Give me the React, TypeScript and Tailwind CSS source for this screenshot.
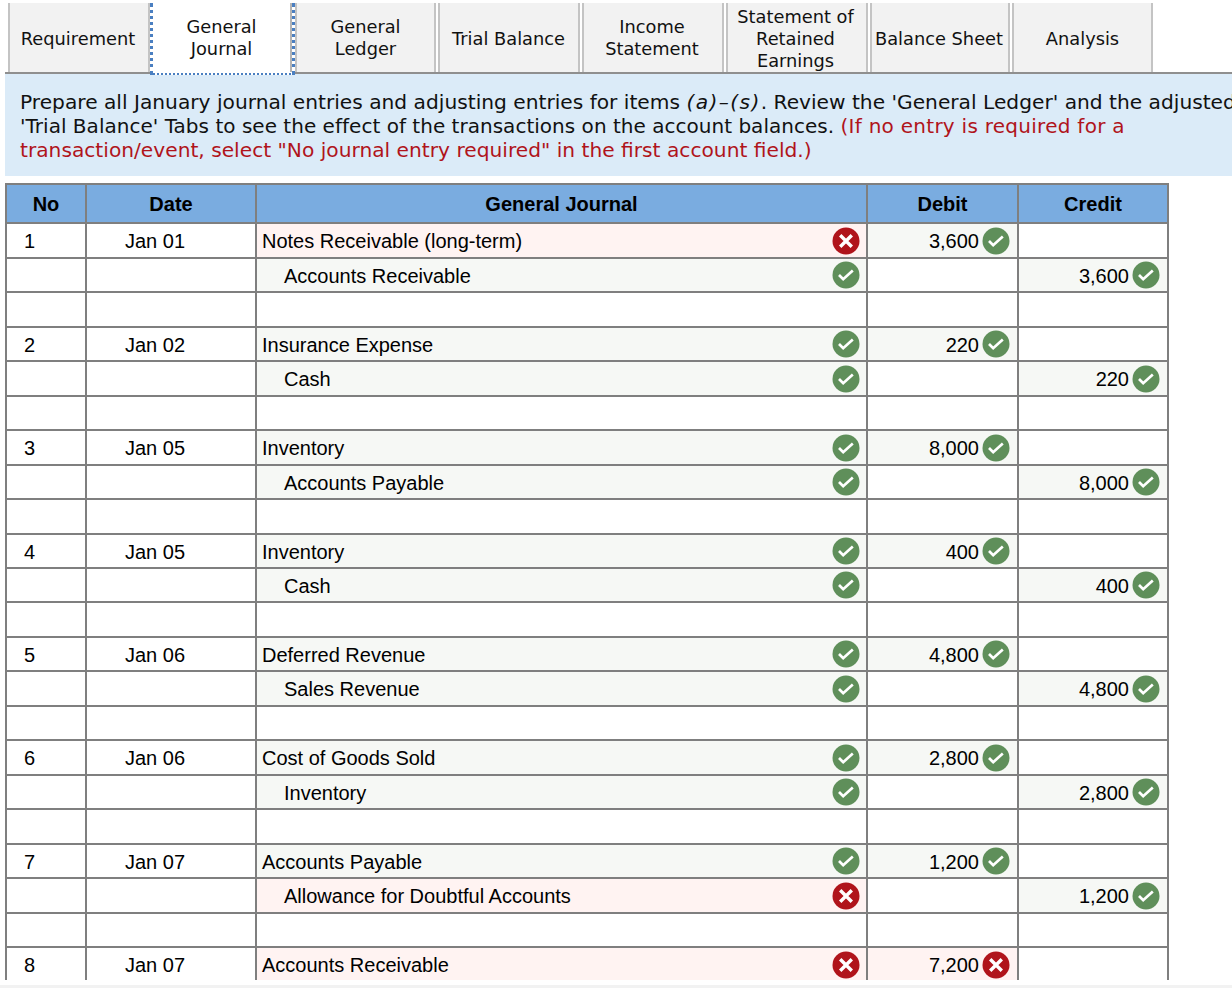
import React from 'react';

const tabs = [
  { label: 'Requirement', size: 'w-[142px] pt-[3px] pr-[2px]' },
  { label: 'General Journal', size: 'w-[145px]', active: true },
  { label: 'General Ledger', size: 'w-[141px] mr-[2px]' },
  { label: 'Trial Balance', size: 'w-[142px] mr-[2px] pt-[3px] pr-[1px]' },
  { label: 'Income Statement', size: 'w-[142px] mr-[2px] pr-[2px]' },
  { label: 'Statement of Retained Earnings', size: 'w-[142px] mr-[2px] pt-[3px] pr-[3px]' },
  { label: 'Balance Sheet', size: 'w-[140px] mr-[2px] pt-[3px] pr-[2px]' },
  { label: 'Analysis', size: 'w-[141px] pt-[3px]' },
];

type Row = { h: string; no?: string; date?: string; account?: string; indent?: boolean; accountOk?: boolean; debit?: string; credit?: string; amountOk?: boolean };

const tall = 'h-[35px]';
const short = 'h-[34px]';

const rows: Row[] = [
  { h: tall, no: '1', date: 'Jan 01', account: 'Notes Receivable (long-term)', accountOk: false, debit: '3,600', amountOk: true },
  { h: short, account: 'Accounts Receivable', indent: true, accountOk: true, credit: '3,600', amountOk: true },
  { h: tall },
  { h: short, no: '2', date: 'Jan 02', account: 'Insurance Expense', accountOk: true, debit: '220', amountOk: true },
  { h: tall, account: 'Cash', indent: true, accountOk: true, credit: '220', amountOk: true },
  { h: short },
  { h: tall, no: '3', date: 'Jan 05', account: 'Inventory', accountOk: true, debit: '8,000', amountOk: true },
  { h: short, account: 'Accounts Payable', indent: true, accountOk: true, credit: '8,000', amountOk: true },
  { h: tall },
  { h: short, no: '4', date: 'Jan 05', account: 'Inventory', accountOk: true, debit: '400', amountOk: true },
  { h: short, account: 'Cash', indent: true, accountOk: true, credit: '400', amountOk: true },
  { h: tall },
  { h: short, no: '5', date: 'Jan 06', account: 'Deferred Revenue', accountOk: true, debit: '4,800', amountOk: true },
  { h: tall, account: 'Sales Revenue', indent: true, accountOk: true, credit: '4,800', amountOk: true },
  { h: short },
  { h: tall, no: '6', date: 'Jan 06', account: 'Cost of Goods Sold', accountOk: true, debit: '2,800', amountOk: true },
  { h: short, account: 'Inventory', indent: true, accountOk: true, credit: '2,800', amountOk: true },
  { h: tall },
  { h: short, no: '7', date: 'Jan 07', account: 'Accounts Payable', accountOk: true, debit: '1,200', amountOk: true },
  { h: tall, account: 'Allowance for Doubtful Accounts', indent: true, accountOk: false, credit: '1,200', amountOk: true },
  { h: short },
  { h: tall, no: '8', date: 'Jan 07', account: 'Accounts Receivable', accountOk: false, debit: '7,200', amountOk: false },
];

const Mark = ({ ok }: { ok: boolean }) => (
  <svg viewBox="0 0 28 28" className="w-[28px] h-[28px] shrink-0">
    <circle cx="14" cy="14" r="13.5" fill={ok ? '#5f8f5a' : '#b0141b'} />
    {ok ? (
      <path d="M7 14l4.2 4.2L20.8 9.6" fill="none" stroke="#fff" strokeWidth="2.7" />
    ) : (
      <path d="M8.2 8.2l11.6 11.6M19.8 8.2L8.2 19.8" fill="none" stroke="#fff" strokeWidth="3.4" />
    )}
  </svg>
);

const Amount = ({ value, ok }: { value?: string; ok?: boolean }) => (
  <div className={`flex items-center justify-end gap-[3px] pr-[7px] border-l-2 border-[#7f7f7f] ${value ? (ok ? 'bg-[#f6f8f5]' : 'bg-[#fff3f2]') : ''}`}>
    {value && <span className="pt-[1px]">{value}</span>}
    {value && <Mark ok={!!ok} />}
  </div>
);

const App = () => {
  return (
    <div className="w-[1232px] h-[988px] overflow-hidden bg-white relative">
      <div className="flex pl-[3px] pt-[3px] h-[74px] ml-[5px] border-b-2 border-[#8f8f8f]">
        {tabs.map((t) =>
          t.active ? (
            <div key={t.label} className={`${t.size} h-[72px] shrink-0 relative z-10 flex bg-white border-x-[3px] border-b-2 border-dotted border-[#4a7fc1]`}>
              <div className="flex-1 h-[69px] flex items-center justify-center text-center text-[17.8px] leading-[22px] font-['DejaVu_Sans',sans-serif] text-[#111] border-r-2 border-[#b4b4b4]">
                <span className="w-[100px]">{t.label}</span>
              </div>
            </div>
          ) : (
            <div
              key={t.label}
              className={`${t.size} h-[69px] shrink-0 flex items-center justify-center text-center text-[17.8px] leading-[22px] font-['DejaVu_Sans',sans-serif] text-[#111] bg-[#f2f2f2] border-x-2 border-[#c4c4c4]`}
            >
              <span>{t.label}</span>
            </div>
          ),
        )}
      </div>

      <div className="ml-[5px] h-[102px] bg-[#dbebf8] pl-[15px] pt-[16px] text-[20px] leading-[24px] font-['DejaVu_Sans',sans-serif] text-[#111] whitespace-nowrap overflow-hidden">
        <div className="text-[20.2px]">Prepare all January journal entries and adjusting entries for items <span className="italic tracking-[1.4px]">(a)–(s)</span>. Review the 'General Ledger' and the adjusted</div>
        <div className="tracking-[0.02px]">'Trial Balance' Tabs to see the effect of the transactions on the account balances. <span className="text-[#b0141b] tracking-[0.27px]">(If no entry is required for a</span></div>
        <div className="text-[#b0141b] text-[20.2px]">transaction/event, select "No journal entry required" in the first account field.)</div>
      </div>

      <div className="ml-[5px] mt-[7px] w-[1164px] h-[797px] overflow-hidden font-['Liberation_Sans',sans-serif] text-[20px] text-black border-x-2 border-t-2 border-[#7f7f7f]">
        <div className="grid grid-cols-[78px_170px_611px_151px_150px] h-[39px] bg-[#7aace0] font-bold text-center border-b-2 border-[#7f7f7f] leading-[39px]">
          <div>No</div>
          <div className="border-l-2 border-[#7f7f7f]">Date</div>
          <div className="border-l-2 border-[#7f7f7f]">General Journal</div>
          <div className="border-l-2 border-[#7f7f7f]">Debit</div>
          <div className="border-l-2 border-[#7f7f7f]">Credit</div>
        </div>
        {rows.map((r, i) => (
          <div key={i} className={`grid grid-cols-[78px_170px_611px_151px_150px] ${r.h} border-b-2 border-[#7f7f7f]`}>
            <div className="pl-[17px] flex items-center"><span className="pt-[1px]">{r.no}</span></div>
            <div className="border-l-2 border-[#7f7f7f] pl-[38px] flex items-center"><span className="pt-[1px]">{r.date}</span></div>
            <div className={`flex items-center justify-between pr-[6px] border-l-2 border-[#7f7f7f] ${r.indent ? 'pl-[27px]' : 'pl-[5px]'} ${r.account ? (r.accountOk ? 'bg-[#f6f8f5]' : 'bg-[#fff3f2]') : ''}`}>
              {r.account && <span className="pt-[1px]">{r.account}</span>}
              {r.account && <Mark ok={!!r.accountOk} />}
            </div>
            <Amount value={r.debit} ok={r.amountOk} />
            <Amount value={r.credit} ok={r.amountOk} />
          </div>
        ))}
      </div>
      <div className="absolute left-0 right-0 bottom-0 h-[3px] bg-[#f2f2f2]" />
    </div>
  );
};

export default App;
